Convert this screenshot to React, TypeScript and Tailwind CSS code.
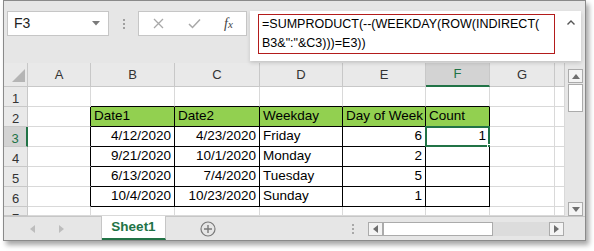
import React from 'react';

const font = { fontFamily: '"Liberation Sans", Arial, sans-serif' };

type Cell = { t: string; right?: boolean };

const rows: Cell[][] = [
  [],
  [{ t: 'Date1' }, { t: 'Date2' }, { t: 'Weekday' }, { t: 'Day of Week' }, { t: 'Count' }],
  [{ t: '4/12/2020', right: true }, { t: '4/23/2020', right: true }, { t: 'Friday' }, { t: '6', right: true }, { t: '1', right: true }],
  [{ t: '9/21/2020', right: true }, { t: '10/1/2020', right: true }, { t: 'Monday' }, { t: '2', right: true }, { t: '' }],
  [{ t: '6/13/2020', right: true }, { t: '7/4/2020', right: true }, { t: 'Tuesday' }, { t: '5', right: true }, { t: '' }],
  [{ t: '10/4/2020', right: true }, { t: '10/23/2020', right: true }, { t: 'Sunday' }, { t: '1', right: true }, { t: '' }],
  [],
];

const letters = ['A', 'B', 'C', 'D', 'E', 'F', 'G', ''];

const Grid = () => {
  const out: React.ReactNode[] = [];

  // header row
  out.push(
    <div key="corner" className="relative bg-[#e9e9e9] border-r border-b border-[#c8c8c8]">
      <svg className="absolute left-[8px] top-[6px]" width="14" height="14" viewBox="0 0 14 14">
        <polygon points="13,0 13,13 0,13" fill="#b5b5b5" />
      </svg>
    </div>
  );
  letters.forEach((l, i) => {
    const sel = l === 'F';
    out.push(
      <div
        key={'h' + i}
        className={
          sel
            ? 'flex items-center justify-center bg-[#d3d3d3] border-r border-[#c8c8c8] border-b-2 border-b-[#217346] text-[13px] text-[#217346]'
            : 'flex items-center justify-center bg-[#e9e9e9] border-r border-b border-[#c8c8c8] text-[13px] text-[#333]'
        }
      >
        {l}
      </div>
    );
  });

  for (let r = 1; r <= 7; r++) {
    const sel = r === 3;
    out.push(
      <div
        key={'r' + r}
        className={
          sel
            ? 'flex items-start justify-center pt-[2px] overflow-hidden bg-[#d3d3d3] border-b border-[#c8c8c8] border-r-2 border-r-[#217346] text-[13px] text-[#217346]'
            : 'flex items-start justify-center pt-[2px] overflow-hidden bg-[#e9e9e9] border-r border-b border-[#c8c8c8] text-[13px] text-[#333]'
        }
      >
        {r}
      </div>
    );
    for (let c = 0; c < 8; c++) {
      const inTable = r >= 2 && r <= 6;
      const isTableCol = c >= 1 && c <= 5;
      const cell = isTableCol ? rows[r - 1][c - 1] : undefined;
      const blackRight = inTable && c <= 5;
      const blackBottom = isTableCol && r >= 1 && r <= 6;
      const green = r === 2 && isTableCol;
      let cls = 'relative flex items-center overflow-visible whitespace-nowrap text-[13.5px] text-black px-[3px] border-r border-b';
      cls += blackRight ? ' border-r-black' : ' border-r-[#d9d9d9]';
      cls += blackBottom ? ' border-b-black' : ' border-b-[#d9d9d9]';
      cls += green ? ' bg-[#92d050]' : ' bg-white';
      if (cell?.right) cls += ' justify-end';
      out.push(
        <div key={r + '-' + c} className={cls}>
          {cell?.t}
          {r === 3 && c === 5 && (
            <>
              <div className="absolute left-[-1px] top-[-1px] right-[-1px] bottom-[-1px] border-2 border-[#217346]" />
              <div className="absolute right-[-4px] bottom-[-4px] w-[6px] h-[6px] bg-[#217346] border border-white" />
            </>
          )}
        </div>
      );
    }
  }

  return (
    <div className="grid grid-cols-[24px_63px_84px_85px_83px_83px_64px_65px_10px] grid-rows-[24px_20px_20px_20px_20px_20px_20px_9px] overflow-hidden">
      {out}
    </div>
  );
};

export default function App() {
  return (
    <div className="w-[594px] h-[251px] bg-white" style={font}>
      <div className="ml-[3px] w-[583px] h-[241px] border border-[#8a8a8a] bg-[#e6e6e6] shadow-[3px_4px_5px_rgba(0,0,0,0.35)] flex flex-col overflow-hidden">
        {/* Formula bar */}
        <div className="h-[62px] flex items-start">
          <div className="ml-[3px] mt-[10px] w-[102px] h-[25px] bg-white border border-[#c6c6c6] flex items-center justify-between pl-[6px] pr-[8px]">
            <span className="text-[14px] text-[#222]">F3</span>
            <svg width="8" height="5" viewBox="0 0 8 5">
              <polygon points="0,0 8,0 4,4.5" fill="#7a7a7a" />
            </svg>
          </div>
          <div className="ml-[14px] mt-[18px] flex flex-col gap-[2px]">
            <div className="w-[2px] h-[2px] bg-[#a0a0a0]" />
            <div className="w-[2px] h-[2px] bg-[#a0a0a0]" />
            <div className="w-[2px] h-[2px] bg-[#a0a0a0]" />
          </div>
          <div className="ml-[13px] mt-[10px] w-[109px] h-[25px] bg-white border border-[#c6c6c6] flex items-center">
            <svg className="ml-[14px]" width="11" height="11" viewBox="0 0 11 11">
              <path d="M1 1 L10 10 M10 1 L1 10" stroke="#a8a8a8" strokeWidth="1.3" />
            </svg>
            <svg className="ml-[24px]" width="13" height="11" viewBox="0 0 13 11">
              <path d="M1 6 L4.5 9.5 L12 1.5" stroke="#a8a8a8" strokeWidth="1.5" fill="none" />
            </svg>
            <span
              className="ml-[23px] text-[14px] italic text-[#444]"
              style={{ fontFamily: '"Liberation Serif", "Times New Roman", serif' }}
            >
              f<span className="text-[11px]">x</span>
            </span>
          </div>
          <div className="relative ml-[3px] mt-[10px] w-[331px] h-[50px] bg-white shadow-[0_2px_4px_rgba(0,0,0,0.15)]">
            <div className="ml-[8px] mt-[3px] w-[297px] h-[40px] border-[1.5px] border-[#b31b1b] pl-[3px] text-[12.5px] leading-[19px] text-black whitespace-nowrap">
              <div>=SUMPRODUCT(--(WEEKDAY(ROW(INDIRECT(</div>
              <div>B3&amp;":"&amp;C3)))=E3))</div>
            </div>
            <svg className="absolute right-[6px] top-[9px]" width="8" height="5" viewBox="0 0 8 5">
              <path d="M0.5 4.5 L4 1 L7.5 4.5" stroke="#555" strokeWidth="1.4" fill="none" />
            </svg>
          </div>
        </div>

        {/* Grid + vertical scrollbar */}
        <div className="h-[153px] flex">
          <Grid />
          <div className="ml-[3px] w-[15px] flex flex-col">
            <div className="mt-[6px] h-[14px] bg-[#f4f4f4] border border-[#ababab] flex items-center justify-center">
              <svg width="8" height="5" viewBox="0 0 8 5">
                <polygon points="0,5 8,5 4,0" fill="#6f6f6f" />
              </svg>
            </div>
            <div className="mt-[1px] h-[28px] bg-white border border-[#ababab]" />
            <div className="flex-1 bg-[#e6e6e6]" />
            <div className="mb-[0px] h-[14px] bg-[#f4f4f4] border border-[#ababab] flex items-center justify-center">
              <svg width="8" height="5" viewBox="0 0 8 5">
                <polygon points="0,0 8,0 4,5" fill="#6f6f6f" />
              </svg>
            </div>
          </div>
        </div>

        {/* Sheet tabs */}
        <div className="h-[24px] flex items-stretch bg-[#e6e6e6]">
          <div className="w-[98px] border-t border-r border-[#c6c6c6] flex items-center">
            <svg className="ml-[26px]" width="5" height="8" viewBox="0 0 5 8">
              <polygon points="5,0 5,8 0,4" fill="#bdbdbd" />
            </svg>
            <svg className="ml-[24px]" width="5" height="8" viewBox="0 0 5 8">
              <polygon points="0,0 0,8 5,4" fill="#bdbdbd" />
            </svg>
          </div>
          <div className="w-[64px] bg-white border-r border-[#c6c6c6] border-b-2 border-b-[#217346] flex items-center justify-center text-[13.5px] font-bold text-[#217346]">
            Sheet1
          </div>
          <div className="flex-1 border-t border-[#c6c6c6] flex items-center">
            <svg className="ml-[34px]" width="16" height="16" viewBox="0 0 16 16">
              <circle cx="8" cy="8" r="7" stroke="#7a7a7a" strokeWidth="1.2" fill="none" />
              <path d="M8 4 V12 M4 8 H12" stroke="#7a7a7a" strokeWidth="1.4" />
            </svg>
            <div className="ml-[136px] flex flex-col gap-[2px]">
              <div className="w-[2px] h-[2px] bg-[#a8a8a8]" />
              <div className="w-[2px] h-[2px] bg-[#a8a8a8]" />
              <div className="w-[2px] h-[2px] bg-[#a8a8a8]" />
            </div>
            <div className="ml-[14px] w-[196px] h-[14px] flex">
              <div className="w-[15px] bg-[#f4f4f4] border border-[#ababab] flex items-center justify-center">
                <svg width="5" height="8" viewBox="0 0 5 8">
                  <polygon points="5,0 5,8 0,4" fill="#6f6f6f" />
                </svg>
              </div>
              <div className="w-[110px] bg-white border border-[#ababab]" />
              <div className="flex-1 bg-[#dcdcdc]" />
              <div className="w-[15px] bg-[#f4f4f4] border border-[#ababab] flex items-center justify-center">
                <svg width="5" height="8" viewBox="0 0 5 8">
                  <polygon points="0,0 0,8 5,4" fill="#6f6f6f" />
                </svg>
              </div>
            </div>
          </div>
        </div>
      </div>
    </div>
  );
}
